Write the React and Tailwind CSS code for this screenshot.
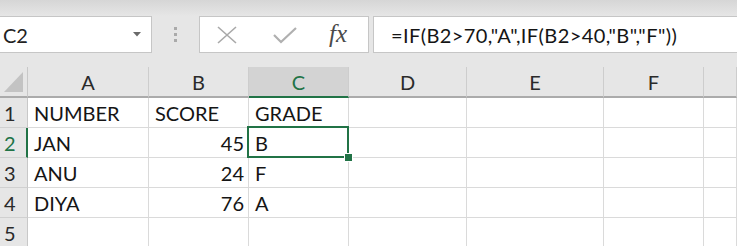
import React from "react";

const cols = [
  { l: "A", w: "w-[121px]" },
  { l: "B", w: "w-[100px]" },
  { l: "C", w: "w-[100px]" },
  { l: "D", w: "w-[118px]" },
  { l: "E", w: "w-[137px]" },
  { l: "F", w: "w-[100px]" },
  { l: "", w: "flex-1" },
];

const data = [
  ["NUMBER", "SCORE", "GRADE"],
  ["JAN", "45", "B"],
  ["ANU", "24", "F"],
  ["DIYA", "76", "A"],
  ["", "", ""],
];

export default function App() {
  return (
    <div
      className="w-[737px] h-[246px] overflow-hidden bg-[#e6e6e6] text-[#151515]"
      style={{ fontFamily: "Lato, 'Open Sans', sans-serif" }}
    >
      {/* top gradient strip */}
      <div className="h-[16px] bg-gradient-to-b from-[#d6d6d6] to-[#e6e6e6]" />

      {/* formula bar */}
      <div className="flex h-[37px] items-stretch">
        <div className="w-[152px] bg-white border border-[#c6c6c6] border-l-0 flex items-center justify-between pl-[3px] pr-[10px]">
          <span className="text-[20px] leading-none text-[#222]">C2</span>
          <svg width="8" height="5" viewBox="0 0 8 5">
            <path d="M0 0 L8 0 L4 4.5 Z" fill="#6a6a6a" />
          </svg>
        </div>
        <div className="w-[47px] flex items-center justify-center">
          <div className="flex flex-col gap-[3px] ml-[-1px]">
            <div className="w-[3px] h-[3px] bg-[#aaa]" />
            <div className="w-[3px] h-[3px] bg-[#aaa]" />
            <div className="w-[3px] h-[3px] bg-[#aaa]" />
          </div>
        </div>
        <div className="w-[170px] bg-white border border-[#c6c6c6] flex items-center">
          <svg width="22" height="18" viewBox="0 0 22 18" className="ml-[16px]">
            <path d="M2 1 L20 17 M20 1 L2 17" stroke="#a9a9a9" strokeWidth="1.6" fill="none" />
          </svg>
          <svg width="24" height="18" viewBox="0 0 24 18" className="ml-[35px]">
            <path d="M1 9 L8 16 L23 2" stroke="#b0b0b0" strokeWidth="2.2" fill="none" />
          </svg>
          <span
            className="ml-[32px] text-[25px] leading-none italic text-[#4a4a4a] mt-[-2px]"
            style={{ fontFamily: "'Liberation Serif', serif" }}
          >
            fx
          </span>
        </div>
        <div className="w-[4px]" />
        <div className="flex-1 bg-white border border-[#c6c6c6] border-r-0 flex items-center pl-[17px]">
          <span className="text-[20px] leading-none text-[#151515] whitespace-nowrap tracking-[0.4px]">
            =IF(B2&gt;70,"A",IF(B2&gt;40,"B","F"))
          </span>
        </div>
      </div>

      <div className="h-[14px]" />

      {/* grid */}
      <div className="flex flex-col bg-white">
        {/* header row */}
        <div className="flex h-[31px] bg-[#e6e6e6]">
          <div className="w-[28px] flex items-end justify-end pr-[4px] pb-[4px] border-b-2 border-[#ababab] border-r border-r-[#c8c8c8]">
            <svg width="19" height="20" viewBox="0 0 19 20">
              <path d="M19 0 L19 20 L0 20 Z" fill="#c3c3c3" />
            </svg>
          </div>
          {cols.map((c, i) => (
            <div
              key={i}
              className={`${c.w} flex items-center justify-center text-[20px] border-r border-r-[#cdcdcd] ${
                c.l === "C"
                  ? "bg-[#d3d3d3] text-[#217346] border-b-2 border-b-[#217346]"
                  : "text-[#2a2a2a] border-b-2 border-b-[#ababab]"
              }`}
            >
              {c.l}
            </div>
          ))}
        </div>

        {data.map((row, r) => (
          <div key={r} className="flex h-[30px]">
            <div
              className={`w-[28px] bg-[#e6e6e6] flex items-center pl-[4px] text-[20px] border-b border-b-[#d0d0d0] ${
                r === 1
                  ? "text-[#217346] border-r-2 border-r-[#217346]"
                  : "text-[#2a2a2a] border-r border-r-[#c8c8c8]"
              }`}
            >
              {r + 1}
            </div>
            {cols.map((c, i) => {
              const v = i < 3 ? row[i] : "";
              const isNum = i === 1 && r > 0;
              const selected = r === 1 && i === 2;
              return (
                <div
                  key={i}
                  className={`${c.w} relative flex items-center text-[20px] border-r border-b border-[#dadada] ${
                    isNum ? "justify-end pr-[4px]" : "pl-[6px]"
                  }`}
                >
                  {v}
                  {selected && (
                    <div className="absolute z-10 left-[-2px] top-[-2px] right-[-1px] bottom-[-1px] border-2 border-[#217346]">
                      <div className="absolute right-[-6px] bottom-[-6px] w-[9px] h-[9px] bg-[#217346] border-[1.5px] border-white" />
                    </div>
                  )}
                </div>
              );
            })}
          </div>
        ))}
      </div>
    </div>
  );
}
